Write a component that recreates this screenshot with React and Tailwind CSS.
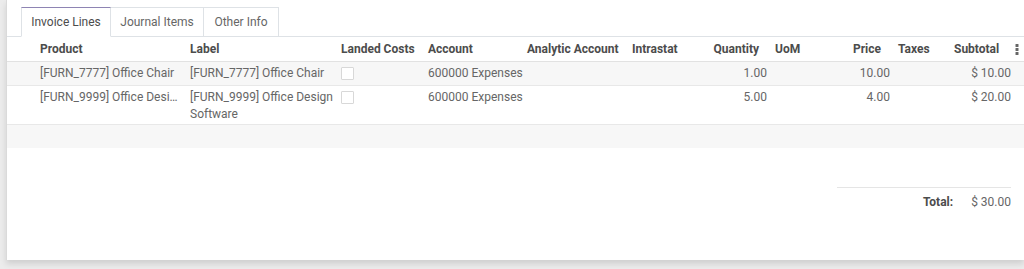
const cols = [29, 150, 151, 87, 99, 105, 72, 71, 59, 64, 56, 65, 9];

const lines = [
  {
    product: '[FURN_7777] Office Chair',
    label: '[FURN_7777] Office Chair',
    account: '600000 Expenses',
    qty: '1.00',
    price: '10.00',
    subtotal: '$ 10.00',
    bg: 'bg-[#f7f7f7]',
  },
  {
    product: '[FURN_9999] Office Design Software',
    label: '[FURN_9999] Office Design Software',
    account: '600000 Expenses',
    qty: '5.00',
    price: '4.00',
    subtotal: '$ 20.00',
    bg: 'bg-white',
  },
];

function Kebab() {
  return (
    <svg width="4" height="11" viewBox="0 0 4 11" className="fill-[#666]">
      <rect x="0.5" y="0" width="3" height="3" rx="0.5" />
      <rect x="0.5" y="4" width="3" height="3" rx="0.5" />
      <rect x="0.5" y="8" width="3" height="3" rx="0.5" />
    </svg>
  );
}

function Check() {
  return <span className="block w-[13px] h-[13px] border border-[#d8d8d8] rounded-[1px] bg-white mt-[2px]" />;
}

export default function App() {
  const th = 'px-[4px] py-[4px] text-left font-bold text-[#4c4c4c] whitespace-nowrap';
  const td = 'px-[4px] pt-[3px] pb-[1px] leading-[17px] align-top';

  return (
    <div className="h-[269px] bg-[#ececec] overflow-hidden font-['Roboto',sans-serif] text-[12px] leading-[16px] text-[#666]">
      <div className="ml-[6px] h-[260px] bg-white border-l border-[#dadada] shadow-[0_4px_6px_rgba(0,0,0,0.12)] pt-[7px]">
        {/* tabs */}
        <div className="flex border-b border-[#dee2e6] pl-[14px] h-[30px]">
          <div className="w-[90px] h-[30px] flex items-center justify-center border border-[#dee2e6] border-t-[#8e84b3] border-b-white bg-white text-[#4c4c4c] mb-[-1px]">
            Invoice Lines
          </div>
          <div className="w-[93px] h-[29px] flex items-center justify-center border border-l-0 border-b-0 border-[#dee2e6]">
            Journal Items
          </div>
          <div className="w-[75px] h-[29px] flex items-center justify-center border border-l-0 border-b-0 border-[#dee2e6]">
            Other Info
          </div>
        </div>

        <table className="table-fixed border-collapse w-[1017px]">
          <colgroup>
            {cols.map((w, i) => (
              <col key={i} style={{ width: w }} />
            ))}
          </colgroup>
          <thead>
            <tr className="h-[24px] border-b border-[#e2e2e2]">
              <th />
              <th className={th}>Product</th>
              <th className={th}>Label</th>
              <th className={th}>Landed Costs</th>
              <th className={th}>Account</th>
              <th className={th}>Analytic Account</th>
              <th className={th}>Intrastat</th>
              <th className={`${th} text-right pr-[12px]`}>Quantity</th>
              <th className={th}>UoM</th>
              <th className={`${th} text-right pr-[13px]`}>Price</th>
              <th className={th}>Taxes</th>
              <th className={`${th} text-right pr-[17px]`}>Subtotal</th>
              <th className="p-0 align-middle">
                <Kebab />
              </th>
            </tr>
          </thead>
          <tbody>
            {lines.map((l, i) => (
              <tr key={i} className={`${l.bg} h-[24px] border-b border-[#e8e8e8]`}>
                <td />
                <td className={`${td} truncate`}>{l.product}</td>
                <td className={td}>{l.label}</td>
                <td className={td}>
                  <Check />
                </td>
                <td className={`${td} whitespace-nowrap`}>{l.account}</td>
                <td className={td} />
                <td className={td} />
                <td className={`${td} text-right`}>{l.qty}</td>
                <td className={td} />
                <td className={`${td} text-right`}>{l.price}</td>
                <td className={td} />
                <td className={`${td} text-right whitespace-nowrap`}>{l.subtotal}</td>
                <td />
              </tr>
            ))}
            <tr className="h-[23px] bg-[#f7f7f7]">
              <td colSpan={13} />
            </tr>
          </tbody>
        </table>

        <div className="flex justify-end pr-[13px] mt-[39px]">
          <div className="w-[174px] border-t border-[#e5e5e5] pt-[6px] flex justify-end items-center gap-[18px]">
            <span className="font-bold text-[#4c4c4c]">Total:</span>
            <span>$ 30.00</span>
          </div>
        </div>
      </div>
    </div>
  );
}
